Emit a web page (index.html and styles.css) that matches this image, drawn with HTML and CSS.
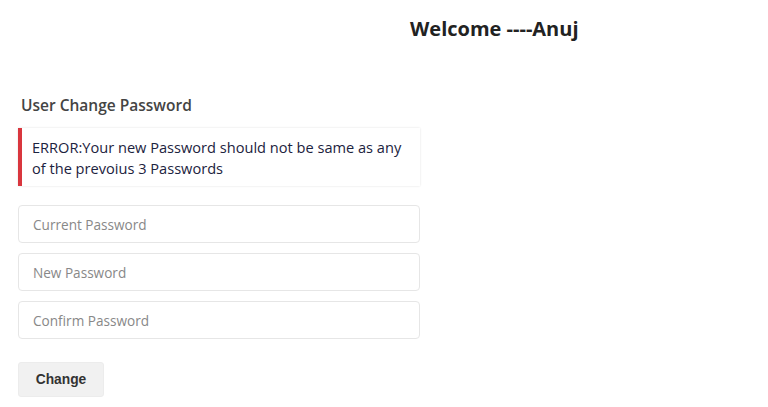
FILE: index.html
```html
<!DOCTYPE html>
<html>
<head>
<meta charset="utf-8">
<link rel="stylesheet" href="styles.css">
</head>
<body>
<header class="top">
  <h1 class="welcome">Welcome ----Anuj</h1>
</header>
<main class="panel">
  <h2 class="title">User Change Password</h2>
  <div class="alert">ERROR:Your new Password should not be same as any of the prevoius 3 Passwords</div>
  <form class="form">
    <input class="field" type="password" placeholder="Current Password">
    <input class="field" type="password" placeholder="New Password">
    <input class="field" type="password" placeholder="Confirm Password">
    <button class="btn" type="button">Change</button>
  </form>
</main>
</body>
</html>
```
FILE: styles.css
```css
* { box-sizing: border-box; }
html, body { margin: 0; padding: 0; background: #fff; }
body { font-family: "Open Sans", "Liberation Sans", sans-serif; color: #333; width: 768px; height: 407px; overflow: hidden; }
.top { padding: 16px 0 0 410px; height: 95px; }
.welcome { margin: 0; font-size: 20px; font-weight: 700; color: #222; line-height: 26px; }
.panel { padding-left: 18px; width: 420px; }
.title { margin: 0 0 13px 3px; font-size: 15.5px; font-weight: 600; color: #444; line-height: 20px; }
.alert {
  border-left: 4px solid #d9363e;
  box-shadow: 0 0 2px rgba(0,0,0,0.12);
  padding: 9px 6px 8px 10px;
  font-size: 14.6px;
  line-height: 21px;
  color: #1c2340;
  height: 58px;
  margin-bottom: 19px;
}
.form { display: flex; flex-direction: column; gap: 10px; }
.field {
  height: 38px; width: 402px;
  border: 1px solid #e6e6e6; border-radius: 4px;
  padding: 0 14px;
  font-family: "Open Sans", "Liberation Sans", sans-serif;
  font-size: 13.6px; color: #333; outline: none;
}
.field::placeholder { color: #888; }
.btn {
  margin-top: 13px; align-self: flex-start;
  width: 86px; height: 35px;
  background: #f1f1f1; border: 1px solid #ececec; border-radius: 3px;
  font-family: "Liberation Sans", Arial, sans-serif; font-weight: 700; font-size: 13.8px; color: #333;
}
```
